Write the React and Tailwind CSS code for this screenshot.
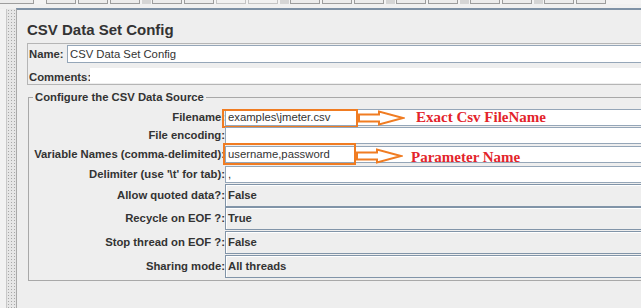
import React from 'react';

const btn = 'w-[30px] mr-[2px] border-x border-b border-[#9d9d9d] bg-[#ececec]';
const btnLight = 'w-[30px] mr-[2px] border-x border-b border-[#c4c4c4] bg-[#f1f1f1]';
const sep = 'w-[9px] mr-[1px] bg-[#d5d5d5]';

const toolbarItems = [
  'w-[34px] border-r border-b border-[#9d9d9d] bg-[#ececec]',
  'w-[12px] bg-[#f3f3f3]',
  btn, btn, btn, sep,
  btn, btn, btnLight, btnLight, sep,
  btn, btn, btn, sep,
  btn, btn, sep,
  btn, btn, sep,
  btn, btn,
];

const labelCls = "font-bold text-[11.3px] text-[#333333] whitespace-nowrap";
const fieldCls = "flex-1 bg-white border border-[#95a6b8] pl-[2px] text-[11.3px] text-[#333333] leading-[15px] whitespace-nowrap";
const comboCls = "flex-1 h-[23px] flex items-center bg-[#eeeeee] border border-[#8194a8] shadow-[inset_1px_1px_0_#ffffff] pl-[2px] font-bold text-[11.3px] text-[#333333]";

const Arrow = () => (
  <svg width="47" height="16" viewBox="0 0 47 16" className="block">
    <polygon
      points="1,4.5 21,4.5 21,1.5 45,8 21,14.5 21,11.5 1,11.5"
      fill="#ffffff"
      stroke="#f07c22"
      strokeWidth="2"
      strokeLinejoin="miter"
    />
  </svg>
);

const TextRow = ({ label, value, className = '', children }) => (
  <div className={`flex items-center h-[17px] ${className}`}>
    <div className={`w-[196px] shrink-0 text-right ${labelCls}`}>{label}</div>
    <div className={`relative h-[17px] ${fieldCls}`}>
      {value}
      {children}
    </div>
  </div>
);

const ComboRow = ({ label, value, className = '' }) => (
  <div className={`flex items-center h-[23px] ${className}`}>
    <div className={`w-[196px] shrink-0 text-right ${labelCls}`}>{label}</div>
    <div className={comboCls}>{value}</div>
  </div>
);

export default function App() {
  return (
    <div className="w-[641px] h-[308px] overflow-hidden bg-[#eeeeee] flex flex-col font-['Liberation_Sans',Arial,sans-serif]">
      {/* toolbar strip */}
      <div className="flex h-[4px] shrink-0 bg-[#f3f3f3]">
        {toolbarItems.map((c, i) => (
          <div key={i} className={`shrink-0 ${c}`} />
        ))}
      </div>
      <div className="h-[4px] shrink-0 bg-[#f0f0f0]" />

      <div className="flex flex-1 min-h-0">
        {/* left splitter */}
        <div className="w-[16px] shrink-0 flex pt-[1px]">
          <div className="w-[7px] bg-[#f2f2f2] border-r border-[#c8c8c8]" />
          <div className="w-[9px] bg-[#e6e6e6] bg-[radial-gradient(circle,#a8a8a8_0.7px,transparent_0.9px)] bg-[length:3px_3px]" />
        </div>

        {/* main panel */}
        <div className="flex-1 min-w-0 border-t-2 border-t-[#7e91a5] border-l border-l-[#a9a9a9] pl-[10px]">
          <div className="mt-[11px] text-[15px] leading-[17px] font-bold text-[#333333]">
            CSV Data Set Config
          </div>

          {/* name / comments */}
          <div className="mt-[5px] w-[700px] border border-[#b5b5b5] py-[1px]">
            <div className="flex items-center h-[18px]">
              <div className={`w-[39px] shrink-0 pl-[1px] ${labelCls}`}>Name:</div>
              <div className={`h-[18px] ${fieldCls} leading-[16px]`}>CSV Data Set Config</div>
            </div>
            <div className="flex items-center h-[15px] mt-[5px]">
              <div className={`w-[62px] shrink-0 pl-[1px] pt-[3px] ${labelCls}`}>Comments:</div>
              <div className="flex-1 h-[15px] bg-white" />
            </div>
          </div>

          {/* data source fieldset */}
          <fieldset className="mt-[6px] ml-[1px] w-[700px] border border-[#a8a8a8] pb-[2px]">
            <legend className={`ml-[4px] px-[2px] leading-[13px] ${labelCls}`}>
              Configure the CSV Data Source
            </legend>
            <div className="mt-[5px] flex flex-col">
              <TextRow label="Filename:" value="examples\jmeter.csv">
                <div className="absolute left-[-4px] top-[-1px] w-[136px] h-[19px] border-2 border-[#f07c22]" />
                <div className="absolute left-[132px] top-[0px]">
                  <Arrow />
                </div>
                <div className="absolute left-[190px] top-[-1px] font-['Liberation_Serif','Times_New_Roman',serif] font-bold text-[15px] leading-[17px] text-[#e3242b]">
                  Exact Csv FileName
                </div>
              </TextRow>
              <TextRow label="File encoding:" value="" className="mt-[1px]" />
              <TextRow label="Variable Names (comma-delimited):" value="username,password" className="mt-[2px]">
                <div className="absolute left-[-3px] top-[-4px] w-[133px] h-[22px] border-2 border-[#f07c22]" />
                <div className="absolute left-[130px] top-[1px]">
                  <Arrow />
                </div>
                <div className="absolute left-[185px] top-[2px] font-['Liberation_Serif','Times_New_Roman',serif] font-bold text-[15px] leading-[17px] text-[#e3242b]">
                  Parameter Name
                </div>
              </TextRow>
              <TextRow label="Delimiter (use '\t' for tab):" value="," className="mt-[3px]" />
              <ComboRow label="Allow quoted data?:" value="False" className="mt-[1px]" />
              <ComboRow label="Recycle on EOF ?:" value="True" />
              <ComboRow label="Stop thread on EOF ?:" value="False" className="mt-[1px]" />
              <ComboRow label="Sharing mode:" value="All threads" className="mt-[1px]" />
            </div>
          </fieldset>
        </div>
      </div>
    </div>
  );
}
